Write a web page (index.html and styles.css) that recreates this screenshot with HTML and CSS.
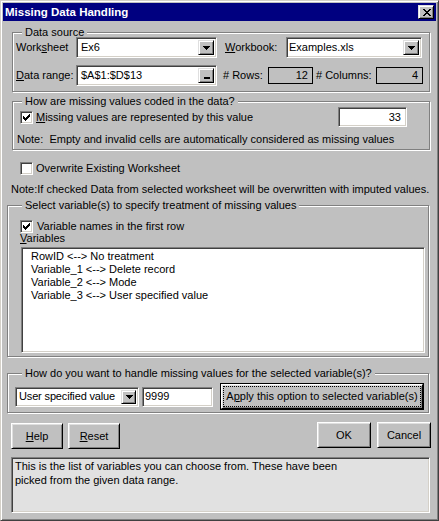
FILE: index.html
```html
<!DOCTYPE html>
<html>
<head>
<meta charset="utf-8">
<title>Missing Data Handling</title>
<link rel="stylesheet" href="styles.css">
</head>
<body>
<div class="window">
  <div class="titlebar">
    <span class="title">Missing Data Handling</span>
    <span class="raised close"><svg width="8" height="7" viewBox="0 0 8 7" shape-rendering="crispEdges"><path d="M0 0h2v1H0z M6 0h2v1H6z M1 1h2v1H1z M5 1h2v1H5z M2 2h4v1H2z M3 3h2v1H3z M2 4h4v1H2z M1 5h2v1H1z M5 5h2v1H5z M0 6h2v1H0z M6 6h2v1H6z" fill="#000"/></svg></span>
  </div>

  <div class="group g1">
    <div class="cap">Data source</div>
    <div class="row r1">
      <span class="lbl l-ws">Work<u>s</u>heet</span>
      <div class="sunken combo c-ws"><span class="val">Ex6</span><span class="raised dd"><svg width="7" height="4" viewBox="0 0 7 4" shape-rendering="crispEdges"><path d="M0 0h7v1H0z M1 1h5v1H1z M2 2h3v1H2z M3 3h1v1H3z" fill="#000"/></svg></span></div>
      <span class="lbl l-wb"><u>W</u>orkbook:</span>
      <div class="sunken combo c-wb"><span class="val">Examples.xls</span><span class="raised dd"><svg width="7" height="4" viewBox="0 0 7 4" shape-rendering="crispEdges"><path d="M0 0h7v1H0z M1 1h5v1H1z M2 2h3v1H2z M3 3h1v1H3z" fill="#000"/></svg></span></div>
    </div>
    <div class="row r2">
      <span class="lbl l-ws"><u>D</u>ata range:</span>
      <div class="sunken combo c-ws"><span class="val">$A$1:$D$13</span><span class="raised dd dd-bar"><i class="bar"></i></span></div>
      <span class="lbl l-rows"># Rows:</span>
      <span class="numbox nb-rows">12</span>
      <span class="lbl l-cols"># Columns:</span>
      <span class="numbox nb-cols">4</span>
    </div>
  </div>

  <div class="group g2">
    <div class="cap">How are missing values coded in the data?</div>
    <div class="row r3">
      <span class="sunken chk"><svg width="7" height="7" viewBox="0 0 7 7" shape-rendering="crispEdges"><path d="M0 2h1v3H0z M1 3h1v3H1z M2 4h1v3H2z M3 3h1v3H3z M4 2h1v3H4z M5 1h1v3H5z M6 0h1v3H6z" fill="#000"/></svg></span>
      <span class="chklbl"><u>M</u>issing values are represented by this value</span>
      <span class="sunken input in-33">33</span>
    </div>
    <div class="note1">Note:&nbsp; Empty and invalid cells are automatically considered as missing values</div>
  </div>

  <div class="row r-over">
    <span class="sunken chk"></span>
    <span class="chklbl">Overwrite Existing Worksheet</span>
  </div>
  <div class="note2">Note:If checked Data from selected worksheet will be overwritten with imputed values.</div>

  <div class="group g3">
    <div class="cap">Select variable(s) to specify treatment of missing values</div>
    <div class="row r-varnames">
      <span class="sunken chk"><svg width="7" height="7" viewBox="0 0 7 7" shape-rendering="crispEdges"><path d="M0 2h1v3H0z M1 3h1v3H1z M2 4h1v3H2z M3 3h1v3H3z M4 2h1v3H4z M5 1h1v3H5z M6 0h1v3H6z" fill="#000"/></svg></span>
      <span class="chklbl">Variable names in the first row</span>
    </div>
    <div class="varlbl"><u>V</u>ariables</div>
    <div class="sunken listbox">
      <div class="item">RowID &lt;--&gt; No treatment</div>
      <div class="item">Variable_1 &lt;--&gt; Delete record</div>
      <div class="item">Variable_2 &lt;--&gt; Mode</div>
      <div class="item">Variable_3 &lt;--&gt; User specified value</div>
    </div>
  </div>

  <div class="group g4">
    <div class="cap">How do you want to handle missing values for the selected variable(s)?</div>
    <div class="row r-handle">
      <div class="sunken combo c-user"><span class="val">User specified value</span><span class="raised dd"><svg width="7" height="4" viewBox="0 0 7 4" shape-rendering="crispEdges"><path d="M0 0h7v1H0z M1 1h5v1H1z M2 2h3v1H2z M3 3h1v1H3z" fill="#000"/></svg></span></div>
      <span class="sunken input in-9999">9999</span>
      <div class="apply"><div class="btn apply-inner"><span class="focus">A<u>p</u>ply this option to selected variable(s)</span></div></div>
    </div>
  </div>

  <div class="buttons">
    <div class="btn-left">
      <div class="btn pb"><u>H</u>elp</div>
      <div class="btn pb pb-reset"><u>R</u>eset</div>
    </div>
    <div class="btn-right">
      <div class="btn pb pb-ok">OK</div>
      <div class="btn pb pb-cancel">Cancel</div>
    </div>
  </div>

  <div class="sunken desc">This is the list of variables you can choose from. These have been<br>picked from the given data range.</div>
</div>
</body>
</html>
```

FILE: styles.css
```css
* {
  box-sizing: border-box;
  margin: 0;
  padding: 0;
}

html, body {
  margin: 0;
  background: #c0c0c0;
}

body {
  width: 439px;
  height: 521px;
  overflow: hidden;
}

.window {
  width: 439px;
  height: 521px;
  border: 1px solid;
  border-color: #d4d0c8 #404040 #404040 #d4d0c8;
  box-shadow: inset 1px 1px #fff, inset -1px -1px #808080;
  padding: 2px;
  background: #c0c0c0;
  font-family: "Liberation Sans", Arial, sans-serif;
  font-size: 11px;
  line-height: 13px;
  color: #000;
  display: flex;
  flex-direction: column;
  align-items: flex-start;
}

u {
  text-decoration: underline;
  text-underline-offset: 1px;
}

.raised {
  background: #c0c0c0;
  border: 1px solid;
  border-color: #dfdfdf #000 #000 #dfdfdf;
  box-shadow: inset 1px 1px #fff, inset -1px -1px #808080;
}

.sunken {
  background: #fff;
  border: 1px solid;
  border-color: #808080 #fff #fff #808080;
  box-shadow: inset 1px 1px #404040, inset -1px -1px #d4d0c8;
}

.btn {
  background: #c0c0c0;
  border: 1px solid;
  border-color: #fff #000 #000 #fff;
  box-shadow: inset 1px 1px #dfdfdf, inset -1px -1px #808080;
  display: flex;
  align-items: center;
  justify-content: center;
}

.titlebar {
  width: 433px;
  height: 18px;
  background: #000080;
  color: #fff;
  display: flex;
  align-items: center;
  justify-content: space-between;
  padding: 0 2px 0 2px;
}

.title {
  font-weight: bold;
  font-size: 11.5px;
}

.close {
  width: 16px;
  height: 14px;
  display: flex;
  align-items: center;
  justify-content: center;
  padding-left: 1px;
}

.close svg {
  display: block;
}

.group {
  display: flex;
  flex-direction: column;
  align-items: flex-start;
  border: 1px solid #808080;
  box-shadow: inset 1px 1px #fff, 1px 1px #fff;
}

.cap {
  background: #c0c0c0;
  margin-top: -7px;
  padding: 0 3px;
  line-height: 13px;
  white-space: nowrap;
}

.g1 {
  margin: 11px 0 0 9px;
  width: 418px;
  padding-bottom: 5px;
}

.g1 .cap,
.g2 .cap {
  margin-left: 9px;
}

.g3 .cap,
.g4 .cap {
  margin-left: 14px;
}

.row {
  display: flex;
  align-items: center;
}

.lbl {
  white-space: nowrap;
}

.r1 {
  margin: -2px 0 0 3px;
  height: 21px;
}

.r2 {
  margin: 7px 0 0 3px;
  height: 21px;
}

.l-ws { width: 60px; }
.l-wb { width: 61px; margin-left: 8px; }
.l-rows { width: 45px; margin-left: 6px; }
.l-cols { width: 60px; margin-left: 3px; }

.combo {
  display: flex;
  align-items: stretch;
  padding: 2px;
  height: 21px;
}

.combo .val {
  flex: 1;
  padding-left: 2px;
  display: flex;
  align-items: center;
  white-space: nowrap;
  overflow: hidden;
}

.c-ws { width: 141px; }
.c-wb { width: 136px; }
.c-wb .val { padding-left: 0; }

.dd {
  width: 16px;
  display: flex;
  align-items: center;
  justify-content: center;
  padding-left: 1px;
}

.dd svg {
  display: block;
}

.dd-bar {
  align-items: flex-end;
  padding-bottom: 3px;
}

.bar {
  display: block;
  width: 6px;
  height: 2px;
  background: #000;
}

.numbox {
  height: 17px;
  border: 1px solid #000;
  display: flex;
  align-items: center;
  justify-content: flex-end;
  padding-right: 4px;
}

.nb-rows { width: 45px; }
.nb-cols { width: 47px; }

.chk {
  width: 13px;
  height: 13px;
  flex: none;
  display: flex;
  align-items: center;
  justify-content: center;
}

.chk svg {
  display: block;
}

.chklbl {
  margin-left: 3px;
  white-space: nowrap;
}

.r3 {
  margin: -1px 0 0 7px;
  width: 387px;
  height: 20px;
}

.input {
  display: flex;
  align-items: center;
  height: 20px;
  white-space: nowrap;
}

.in-33 {
  margin-left: auto;
  width: 69px;
  justify-content: flex-end;
  padding-right: 5px;
}

.note1 {
  margin: 6px 0 0 4px;
  white-space: nowrap;
}

.g2 {
  margin: 9px 0 0 9px;
  width: 418px;
  padding-bottom: 3px;
}

.r-over {
  margin: 12px 0 0 17px;
  height: 13px;
}

.note2 {
  margin: 8px 0 0 8px;
  white-space: nowrap;
}

.g3 {
  margin: 9px 0 0 4px;
  width: 422px;
  padding-bottom: 3px;
}

.r-varnames {
  margin: 8px 0 0 12px;
  height: 13px;
}

.r-varnames .chklbl {
  margin-left: 4px;
}

.varlbl {
  margin: -1px 0 0 12px;
}

.listbox {
  margin: 2px 0 0 13px;
  width: 404px;
  height: 106px;
  padding: 2px 0 0 9px;
}

.item {
  line-height: 13px;
  white-space: nowrap;
}

.g4 {
  margin: 16px 0 0 4px;
  width: 422px;
  padding-bottom: 2px;
}

.r-handle {
  margin: 3px 0 0 7px;
  height: 27px;
}

.c-user {
  width: 124px;
  height: 20px;
}

.c-user .val {
  padding-left: 1px;
  letter-spacing: -0.15px;
}

.c-user .dd {
  width: 15px;
}

.in-9999 {
  margin-left: 3px;
  width: 71px;
  padding-left: 2px;
}

.apply {
  margin-left: 7px;
  width: 204px;
  height: 27px;
  border: 1px solid #000;
  display: flex;
}

.apply-inner {
  flex: 1;
  padding: 1px;
  align-items: stretch;
}

.focus {
  flex: 1;
  border: 1px dotted #000;
  display: flex;
  align-items: center;
  justify-content: center;
  white-space: nowrap;
}

.buttons {
  margin-top: 10px;
  width: 433px;
  display: flex;
  justify-content: space-between;
  align-items: flex-start;
}

.btn-left {
  display: flex;
  margin-left: 8px;
}

.btn-right {
  display: flex;
  margin-right: 5px;
  margin-top: -1px;
}

.pb {
  width: 52px;
  height: 26px;
}

.pb-reset { margin-left: 5px; }
.pb-ok { width: 54px; }
.pb-cancel { width: 54px; margin-left: 6px; }

.desc {
  margin: 8px 0 0 8px;
  width: 419px;
  height: 56px;
  background: #e1e1e1;
  padding: 1px 0 0 3px;
  line-height: 14px;
}
```
